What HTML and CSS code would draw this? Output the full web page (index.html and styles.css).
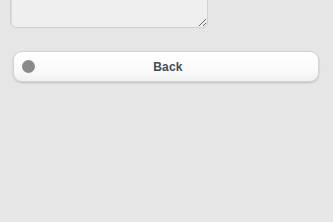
FILE: index.html
```html
<!DOCTYPE html>
<html lang="en">
<head>
  <meta charset="UTF-8"/>
  <meta name="viewport" content="width=device-width,initial-scale=1"/>
  <title>Back</title>
  <link rel="stylesheet" href="styles.css">
</head>
<body>
  <div class="page">
    <!-- notes field, scrolled partly out of view -->
    <textarea class="notes"></textarea>

    <button class="back" type="button">
      <span class="dot"></span>
      <span class="label">Back</span>
    </button>
  </div>
</body>
</html>
```

FILE: styles.css
```css
html, body { margin: 0; height: 100%; }
body {
  background: #e6e6e6;
  font-family: "Liberation Sans", Arial, sans-serif;
  overflow: hidden;
}
.page { display: flex; flex-direction: column; padding: 0 14px 0 10px; }
.notes {
  display: block; box-sizing: border-box;
  width: 198px; height: 70px; margin-top: -42px;
  background: #efefef; border: 1px solid #cfcfcf; border-radius: 6px;
  box-shadow: inset 1px 1px 1px #dadada;
  resize: both; outline: none;
}
.back {
  position: relative;
  display: flex; align-items: center; justify-content: center;
  box-sizing: border-box;
  height: 31px; margin: 23px 0 0 3px; padding: 0;
  background: linear-gradient(#ffffff, #fbfbfb 55%, #f1f1f1);
  border: 1px solid #d2d2d2; border-radius: 9px;
  box-shadow: 0 1px 2px rgba(0, 0, 0, 0.18);
  font-family: "Liberation Sans", Arial, sans-serif;
  font-size: 12px; font-weight: bold; color: #434b5a;
  letter-spacing: 0.2px;
  cursor: pointer;
}
.dot {
  position: absolute; left: 8px; top: 8px;
  width: 13px; height: 13px; border-radius: 50%;
  background: #8a8a8a;
}
.label { padding-left: 4px; }
```
